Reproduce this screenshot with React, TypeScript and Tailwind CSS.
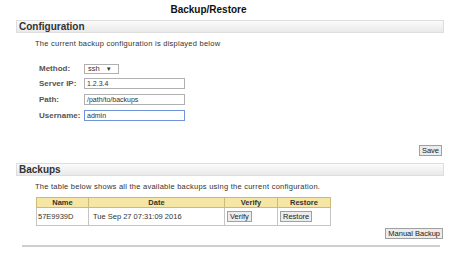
import React from "react";

const font = { fontFamily: '"Liberation Sans", Arial, sans-serif' };

function SectionBar({ title }: { title: string }) {
  return (
    <div className="h-[13px] border border-[#dedede] bg-gradient-to-b from-[#fbfbfb] to-[#e9e9e9] flex items-center pl-[2px]">
      <span className="text-[10px] font-bold text-[#333] leading-none">{title}</span>
    </div>
  );
}

function Btn({ children }: { children: React.ReactNode }) {
  return (
    <button className="h-[11px] px-[2px] border border-[#a0a0a0] bg-[#ececec] text-[7.5px] leading-none text-[#222] flex items-center">
      {children}
    </button>
  );
}

function Field({ label, value, focused, className = "" }: { label: string; value: string; focused?: boolean; className?: string }) {
  return (
    <div className={`flex items-center ${className}`}>
      <span className="w-[45px] text-[8px] font-bold text-[#555] leading-none">{label}</span>
      <div
        className={`w-[101px] h-[11px] border bg-white text-[7px] text-[#333] leading-none flex items-center pl-[2px] ${
          focused ? "border-[#6f95d8]" : "border-[#b0b0b0]"
        }`}
      >
        {value}
      </div>
    </div>
  );
}

export default function App() {
  return (
    <div className="w-[474px] h-[258px] overflow-hidden bg-white" style={font}>
      <div className="w-[417px] text-center pt-[4px] text-[10px] font-bold text-[#111] leading-[12px]">Backup/Restore</div>

      <div className="ml-[16px] w-[428px] mt-[4px]">
        <SectionBar title="Configuration" />
        <p className="mt-[6px] pl-[19px] text-[7.5px] tracking-[0.25px] text-[#333] leading-[10px]">
          The current backup configuration is displayed below
        </p>

        <div className="pl-[23px]">
          <div className="flex items-center mt-[15px] h-[10px]">
            <span className="w-[45px] text-[8px] font-bold text-[#555] leading-none">Method:</span>
            <div className="w-[35px] h-[10px] border border-[#b0b0b0] bg-white text-[7.5px] text-[#333] leading-none flex items-center pl-[3px] gap-[6px]">
              <span>ssh</span>
              <span className="text-[6px]">▼</span>
            </div>
          </div>
          <Field label="Server IP:" value="1.2.3.4" className="mt-[4px]" />
          <Field label="Path:" value="/path/to/backups" className="mt-[5px]" />
          <Field label="Username:" value="admin" focused className="mt-[5px]" />
        </div>

        <div className="flex justify-end pr-[2px] mt-[24px]">
          <Btn>Save</Btn>
        </div>
      </div>

      <div className="ml-[16px] w-[428px] mt-[7px]">
        <SectionBar title="Backups" />
        <p className="mt-[6px] pl-[19px] text-[7.5px] tracking-[0.25px] text-[#333] leading-[10px]">
          The table below shows all the available backups using the current configuration.
        </p>

        <table className="ml-[20px] mt-[5px] border-collapse text-[7.5px] text-[#333]">
          <thead>
            <tr className="bg-[#f6e6a6] h-[10px] leading-none">
              <th className="w-[52px] border border-[#cdb97a] font-bold">Name</th>
              <th className="w-[136px] border border-[#cdb97a] font-bold">Date</th>
              <th className="w-[53px] border border-[#cdb97a] font-bold">Verify</th>
              <th className="w-[53px] border border-[#cdb97a] font-bold">Restore</th>
            </tr>
          </thead>
          <tbody>
            <tr className="h-[18px]">
              <td className="border border-[#c4c4c4] pl-[1px]">57E9939D</td>
              <td className="border border-[#c4c4c4] pl-[4px]">Tue Sep 27 07:31:09 2016</td>
              <td className="border border-[#c4c4c4] pl-[2px]">
                <Btn>Verify</Btn>
              </td>
              <td className="border border-[#c4c4c4] pl-[2px]">
                <Btn>Restore</Btn>
              </td>
            </tr>
          </tbody>
        </table>

        <div className="flex justify-end pr-[1px] mt-[2px]">
          <Btn>Manual Backup</Btn>
        </div>
        <div className="ml-[6px] w-[418px] h-[2px] bg-[#cfcfcf] mt-[6px]" />
      </div>
    </div>
  );
}
